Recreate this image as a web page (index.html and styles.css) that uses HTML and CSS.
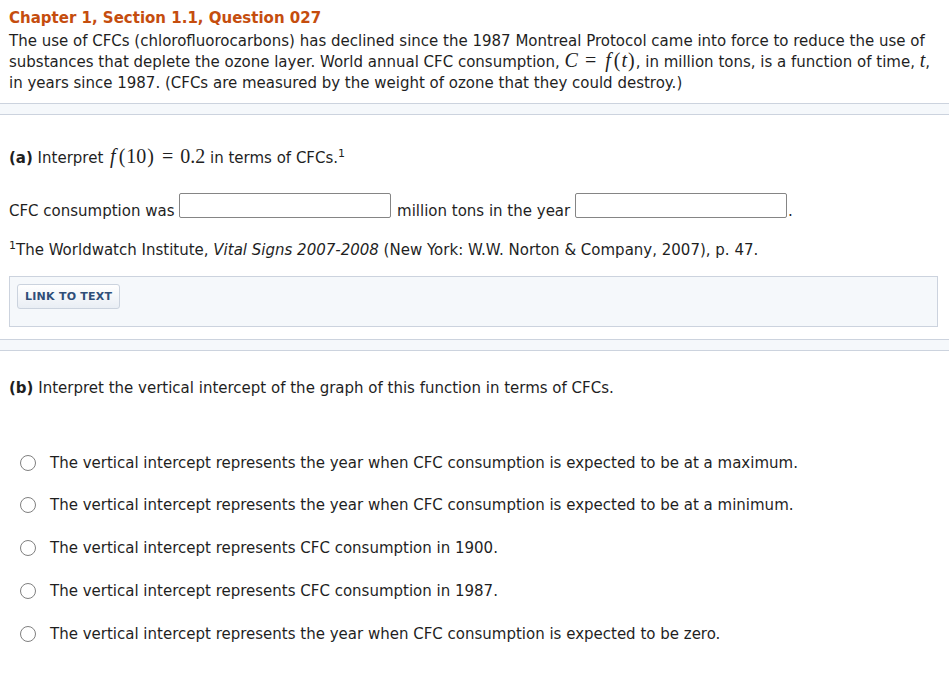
FILE: index.html
```html
<!DOCTYPE html>
<html lang="en">
<head>
<meta charset="utf-8">
<title>Chapter 1, Section 1.1, Question 027</title>
<link rel="stylesheet" href="styles.css">
</head>
<body>
<main class="question">
  <header class="qhead">
    <h1 class="qtitle">Chapter 1, Section 1.1, Question 027</h1>
    <p class="intro">The use of CFCs (chlorofluorocarbons) has declined since the 1987 Montreal Protocol came into force to reduce the use of substances that deplete the ozone layer. World annual CFC consumption, <span class="math"><i>C</i><span class="eq">=</span><i class="fi">f</i><span class="par">(</span><i>t</i><span class="par">)</span></span>, in million tons, is a function of time, <span class="math"><i>t</i></span>, in years since 1987. (CFCs are measured by the weight of ozone that they could destroy.)</p>
  </header>

  <div class="sep"></div>

  <section class="part part-a">
    <p class="prompt"><b class="plabel">(a)</b> Interpret <span class="math"><i class="fi">f</i><span class="par">(</span>10<span class="par">)</span><span class="eq">=</span>0.2</span> in terms of CFCs.<sup class="fn">1</sup></p>
    <p class="answer">CFC consumption was <span class="field"></span> million tons in the year <span class="field"></span>.</p>
    <p class="footnote"><sup class="fn">1</sup>The Worldwatch Institute, <i>Vital Signs 2007-2008</i> (New York: W.W. Norton &amp; Company, 2007), p. 47.</p>
    <div class="linkbox"><button class="linkbtn" type="button">LINK TO TEXT</button></div>
  </section>

  <div class="sep"></div>

  <section class="part part-b">
    <p class="prompt"><b class="plabel">(b)</b> Interpret the vertical intercept of the graph of this function in terms of CFCs.</p>
    <ul class="choices">
      <li class="choice"><span class="radio"></span><span>The vertical intercept represents the year when CFC consumption is expected to be at a maximum.</span></li>
      <li class="choice"><span class="radio"></span><span>The vertical intercept represents the year when CFC consumption is expected to be at a minimum.</span></li>
      <li class="choice"><span class="radio"></span><span>The vertical intercept represents CFC consumption in 1900.</span></li>
      <li class="choice"><span class="radio"></span><span>The vertical intercept represents CFC consumption in 1987.</span></li>
      <li class="choice"><span class="radio"></span><span>The vertical intercept represents the year when CFC consumption is expected to be zero.</span></li>
    </ul>
  </section>
</main>
</body>
</html>
```

FILE: styles.css
```css
html, body {
  margin: 0;
  padding: 0;
  background: #ffffff;
}

body {
  font-family: "DejaVu Sans", Verdana, sans-serif;
  font-size: 15px;
  line-height: 21px;
  color: #1f1f1f;
}

.question {
  display: flex;
  flex-direction: column;
}

.qhead {
  padding: 8px 10px 0 9px;
}

.qtitle {
  margin: 0;
  font-size: 15px;
  line-height: 21px;
  font-weight: bold;
  color: #c54d0e;
}

.intro {
  margin: 2px 0 9px;
}

.math {
  font-family: "Liberation Serif", "Times New Roman", serif;
  font-size: 20px;
  line-height: 14px;
  white-space: nowrap;
}

.math i {
  font-style: italic;
}

.fi {
  margin: 0 2px 0 2px;
}

.par {
  padding: 0 1px;
}

.eq {
  padding: 0 7px;
}

.sep {
  flex: none;
  height: 10px;
  border-top: 1px solid #ccd3de;
  border-bottom: 1px solid #ccd3de;
  background: #f5f8fb;
}

.part {
  padding: 0 11px 0 9px;
}

.part-a {
  padding-top: 33px;
  padding-bottom: 12px;
}

.prompt {
  margin: 0;
}

.plabel {
  font-weight: bold;
}

.fn {
  font-size: 11px;
  line-height: 0;
  vertical-align: 6px;
}

.answer {
  margin: 24px 0 0;
}

.field {
  display: inline-block;
  width: 210px;
  height: 23px;
  border: 1px solid #858585;
  border-radius: 2px;
  background: #ffffff;
  vertical-align: -2px;
  margin-right: 1px;
}

.footnote {
  margin: 18px 0 0;
}

.linkbox {
  margin-top: 15px;
  padding: 7px 7px 17px;
  border: 1px solid #ccd3de;
  background: #f5f8fb;
}

.linkbtn {
  display: block;
  height: 25px;
  padding: 0 7px;
  font-family: "DejaVu Sans", Verdana, sans-serif;
  font-size: 11px;
  letter-spacing: 0.25px;
  font-weight: bold;
  color: #2f4e78;
  background: linear-gradient(#ffffff, #e9eef4);
  border: 1px solid #cbd3de;
  border-radius: 3px;
}

.part-b {
  padding-top: 27px;
}

.choices {
  list-style: none;
  margin: 54px 0 0;
  padding: 0;
  display: flex;
  flex-direction: column;
  gap: 22px;
}

.choice {
  display: flex;
  align-items: center;
  gap: 14px;
  padding-left: 11px;
}

.choice:first-child {
  margin-bottom: -1px;
}

.radio {
  flex: none;
  width: 14px;
  height: 14px;
  margin-top: -2px;
  border: 1px solid #808080;
  border-radius: 50%;
  background: #ffffff;
}
```
